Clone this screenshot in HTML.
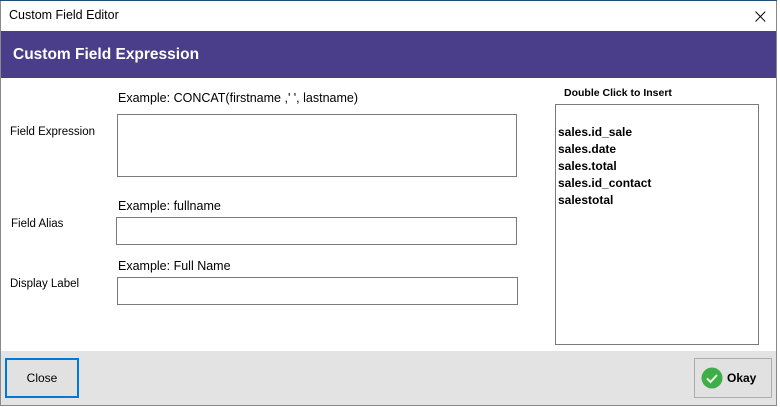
<!DOCTYPE html><html><head><style>
body{margin:0;width:780px;height:407px;overflow:hidden;background:#fff;font-family:"Liberation Sans",sans-serif;position:relative}
.a{position:absolute}
.t{font-size:11.5px;color:#000}
.box{position:absolute;border:1px solid #7a7a7a;background:#fff;box-sizing:border-box}
</style></head><body>
<div class="a" style="left:0;top:0;width:777px;height:406px;border:1px solid #8a8a8a;box-sizing:border-box"></div>
<div class="a" style="left:0;top:0;width:777px;height:1px;background:#1e4f7a"></div>
<div class="a t" style="left:9px;top:8px;font-size:12.5px">Custom Field Editor</div>
<div class="a" style="left:752px;top:4px;font-size:20px;color:#000;font-weight:100;font-family:'DejaVu Sans',sans-serif">×</div>
<div class="a" style="left:1px;top:31px;width:775px;height:47px;background:#4a3d89"></div>
<div class="a" style="left:13px;top:46px;color:#fff;font-weight:bold;font-size:15.5px">Custom Field Expression</div>
<div class="a" style="left:118px;top:91px;font-size:12.5px">Example: CONCAT(firstname ,' ', lastname)</div>
<div class="a t" style="left:10px;top:126px">Field Expression</div>
<div class="box" style="left:117px;top:114px;width:400px;height:63px"></div>
<div class="a" style="left:118px;top:199px;font-size:12.5px">Example: fullname</div>
<div class="a t" style="left:11px;top:218px">Field Alias</div>
<div class="box" style="left:116px;top:217px;width:401px;height:28px"></div>
<div class="a" style="left:118px;top:259px;font-size:12.5px">Example: Full Name</div>
<div class="a t" style="left:10px;top:278px">Display Label</div>
<div class="box" style="left:117px;top:277px;width:401px;height:28px"></div>
<div class="a" style="left:564px;top:87px;font-size:10.5px;font-weight:bold">Double Click to Insert</div>
<div class="box" style="left:555px;top:104px;width:204px;height:241px"></div>
<div class="a" style="left:558px;top:124px;font-size:12px;font-weight:bold;line-height:17px">sales.id_sale<br>sales.date<br>sales.total<br>sales.id_contact<br>salestotal</div>
<div class="a" style="left:1px;top:351px;width:775px;height:54px;background:#e3e3e3"></div>
<div class="a" style="left:5px;top:358px;width:74px;height:40px;border:2px solid #0078d7;box-sizing:border-box;background:#e1e1e1;font-size:12px;text-align:center;line-height:36px">Close</div>
<div class="a" style="left:694px;top:358px;width:78px;height:40px;border:1px solid #adadad;box-sizing:border-box;background:#e1e1e1"></div>
<svg class="a" style="left:701px;top:367px" width="22" height="22" viewBox="0 0 22 22"><circle cx="11" cy="11" r="10.5" fill="#3fae49"/><path d="M6 11.5l3.5 3.5 6.5-7" stroke="#e8ffe0" stroke-width="2" fill="none"/></svg>
<div class="a" style="left:727px;top:371px;font-size:12px;font-weight:bold">Okay</div>
</body></html>
